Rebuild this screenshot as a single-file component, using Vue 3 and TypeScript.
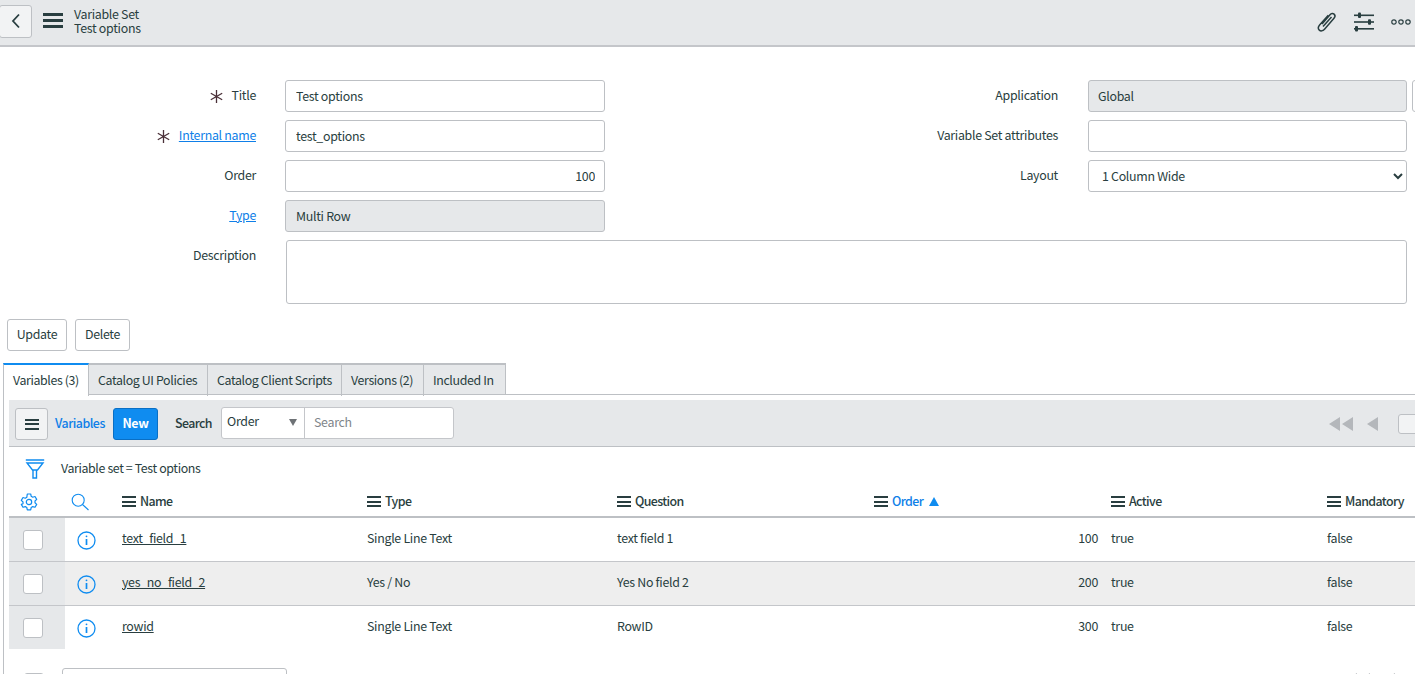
<script setup lang="ts">
interface Row {
  name: string
  type: string
  question: string
  order: number
  active: string
  mandatory: string
}

const tabs: string[] = ['Variables (3)', 'Catalog UI Policies', 'Catalog Client Scripts', 'Versions (2)', 'Included In']

const columns = [
  { label: 'Name', cls: '' },
  { label: 'Type', cls: '' },
  { label: 'Question', cls: '' },
  { label: 'Order', cls: 'sorted' },
  { label: 'Active', cls: '' },
  { label: 'Mandatory', cls: '' },
]

const rows: Row[] = [
  { name: 'text_field_1', type: 'Single Line Text', question: 'text field 1', order: 100, active: 'true', mandatory: 'false' },
  { name: 'yes_no_field_2', type: 'Yes / No', question: 'Yes No field 2', order: 200, active: 'true', mandatory: 'false' },
  { name: 'rowid', type: 'Single Line Text', question: 'RowID', order: 300, active: 'true', mandatory: 'false' },
]
</script>

<template>
  <div class="page">
    <header class="topbar">
      <button class="back">
        <svg width="10" height="16" viewBox="0 0 10 16"><path d="M8 1.500 2 8l6 6.500" fill="none" stroke="#293e40" stroke-width="1.800" /></svg>
      </button>
      <span class="burger big"><i></i><i></i><i></i></span>
      <div class="heading">
        <div>Variable Set</div>
        <div>Test options</div>
      </div>
      <div class="top-icons">
        <svg class="clip" width="22" height="22" viewBox="0 0 22 22" fill="none" stroke="#293e40" stroke-width="1.500">
          <path d="M6 13 14 3.700c1.300-1.500 3-1.600 4.100-.6s1.100 2.800-.1 4.200L8.500 18.300c-1.700 1.900-3.900 2-5.200.8s-1.200-3.200.3-5L12.300 4.300" />
          <path d="M7 15.500 15.500 6" />
        </svg>
        <svg width="20" height="20" viewBox="0 0 20 20" fill="#293e40">
          <rect y="2.500" width="20" height="1.600" /><rect x="4" y="0.500" width="3" height="5.500" rx="1" />
          <rect y="9.200" width="20" height="1.600" /><rect x="14" y="7.200" width="3" height="5.500" rx="1" />
          <rect y="16" width="20" height="1.600" /><rect x="1" y="14" width="3" height="5.500" rx="1" />
        </svg>
        <svg width="20" height="6" viewBox="0 0 20 6" fill="none" stroke="#293e40" stroke-width="1.200">
          <circle cx="3" cy="3" r="2.200" /><circle cx="10" cy="3" r="2.200" /><circle cx="17" cy="3" r="2.200" />
        </svg>
      </div>
    </header>

    <form class="form" @submit.prevent>
      <div class="form-grid">
        <div class="label">
          <svg class="req" width="13" height="13" viewBox="0 0 13 13" stroke="#4a3038" stroke-width="1.300"><path d="M6.500 0v13M.8 3.200l11.400 6.600M12.200 3.200.8 9.800" /></svg>Title
        </div>
        <input class="field" value="Test options" />
        <div class="label">Application</div>
        <div class="app-cell">
          <input class="field ro" value="Global" readonly />
          <span class="lookup"></span>
        </div>

        <div class="label">
          <svg class="req" width="13" height="13" viewBox="0 0 13 13" stroke="#4a3038" stroke-width="1.300"><path d="M6.500 0v13M.8 3.200l11.400 6.600M12.200 3.200.8 9.800" /></svg><a>Internal name</a>
        </div>
        <input class="field" value="test_options" />
        <div class="label">Variable Set attributes</div>
        <input class="field narrow" value="" />

        <div class="label">Order</div>
        <input class="field num" value="100" />
        <div class="label">Layout</div>
        <select class="field narrow pick"><option>1 Column Wide</option></select>

        <div class="label"><a>Type</a></div>
        <input class="field ro" value="Multi Row" readonly />
        <div></div>
        <div></div>

        <div class="label">Description</div>
        <textarea class="field desc"></textarea>
      </div>

      <div class="actions">
        <button class="btn">Update</button>
        <button class="btn">Delete</button>
      </div>
    </form>

    <section class="related">
      <div class="tabs">
        <div v-for="(t, i) in tabs" :key="t" class="tab" :class="{ active: i === 0 }">{{ t }}</div>
      </div>

      <div class="panel">
        <div class="toolbar">
          <button class="menu-btn"><span class="burger"><i></i><i></i><i></i></span></button>
          <span class="list-title">Variables</span>
          <button class="new">New</button>
          <span class="search-label">Search</span>
          <div class="search">
            <div class="search-col">Order<span class="caret"></span></div>
            <div class="search-input">Search</div>
          </div>
          <div class="pager">
            <svg width="24" height="14" viewBox="0 0 24 14" fill="#b4b7bb"><path d="M11 0v14L0 7zM24 0v14L13 7z" /></svg>
            <svg width="11" height="14" viewBox="0 0 11 14" fill="#b4b7bb"><path d="M11 0v14L0 7z" /></svg>
            <span class="page-box"></span>
          </div>
        </div>

        <div class="crumb">
          <svg width="20" height="21" viewBox="0 0 20 21" fill="none" stroke="#0f8cf0" stroke-width="1.400">
            <path d="M.8 1h18.400M2 4h16l-5.500 7h-5L2 4zM8 11v8h3.500v-8" />
          </svg>
          <span>Variable set = Test options</span>
        </div>

        <div class="grid head">
          <div class="cell">
            <svg class="gear" width="18" height="18" viewBox="0 0 18 18" fill="none" stroke="#0f8cf0" stroke-width="1.200" stroke-linejoin="round">
              <path d="M7.300 1h3.400l.5 2.300 1.500.9 2.300-.7 1.700 2.900-1.700 1.600v1.800l1.700 1.600-1.700 2.900-2.300-.7-1.500.9-.5 2.300H7.300l-.5-2.300-1.500-.9-2.300.7-1.700-2.900L3 10.800V9L1.300 7.400 3 4.500l2.300.7 1.500-.9z" />
              <circle cx="9" cy="9" r="2.700" />
            </svg>
          </div>
          <div class="cell">
            <svg class="lens" width="18" height="18" viewBox="0 0 18 18" fill="none" stroke="#0f8cf0" stroke-width="1.100">
              <circle cx="7.200" cy="7.200" r="6" /><path d="m11.500 11.500 6 5.500" />
            </svg>
          </div>
          <div v-for="c in columns" :key="c.label" class="cell th" :class="c.cls">
            <span class="burger"><i></i><i></i><i></i></span>
            <span class="th-text">{{ c.label }}</span>
            <span v-if="c.cls" class="sort-up"></span>
          </div>
        </div>

        <div v-for="(r, i) in rows" :key="r.name" class="grid row" :class="{ odd: i === 1, last: i === rows.length - 1 }">
          <div class="cell check-cell"><span class="check"></span></div>
          <div class="cell info-cell">
            <svg width="19" height="19" viewBox="0 0 19 19" fill="none" stroke="#0f8cf0" stroke-width="1.300">
              <circle cx="9.500" cy="9.500" r="8.500" />
              <path d="M9.500 8v6" stroke-width="1.700" />
              <circle cx="9.500" cy="5.300" r=".9" fill="#0f8cf0" stroke="none" />
            </svg>
          </div>
          <div class="cell txt"><a class="rec">{{ r.name }}</a></div>
          <div class="cell txt">{{ r.type }}</div>
          <div class="cell txt">{{ r.question }}</div>
          <div class="cell txt order">{{ r.order }}</div>
          <div class="cell txt">{{ r.active }}</div>
          <div class="cell txt">{{ r.mandatory }}</div>
        </div>

        <div class="foot">
          <span class="check foot-check"></span>
          <span class="foot-select"></span>
          <div class="pager foot-pager">
            <svg width="24" height="14" viewBox="0 0 24 14" fill="#b4b7bb"><path d="M11 0v14L0 7zM24 0v14L13 7z" /></svg>
            <svg width="11" height="14" viewBox="0 0 11 14" fill="#b4b7bb"><path d="M11 0v14L0 7z" /></svg>
            <span class="page-box"></span>
          </div>
        </div>
      </div>
    </section>
  </div>
</template>

<style>
html, body { margin: 0; background: #fff; overflow: hidden; }
</style>

<style scoped>
.page {
  width: 1415px;
  height: 674px;
  overflow: hidden;
  font-family: "Noto Sans CJK JP", "Open Sans", sans-serif;
  font-size: 12.4px;
  letter-spacing: -0.3px;
  line-height: 18px;
  color: #293e40;
}

/* header */
.topbar {
  height: 45px;
  display: flex;
  align-items: center;
  background: #e6e8ea;
  border-bottom: 2px solid #c4c6ca;
}
.back {
  width: 33px;
  height: 33px;
  margin: -3px 0 0 -1px;
  padding: 0;
  background: #f2f3f4;
  border: 1px solid #bdc0c4;
  border-radius: 3px;
  display: flex;
  align-items: center;
  justify-content: center;
}
.burger {
  display: inline-flex;
  flex-direction: column;
  justify-content: space-between;
  width: 14px;
  height: 11px;
  flex: none;
}
.burger i { display: block; height: 2px; background: #293e40; }
.burger.big {
  width: 20px;
  height: 15px;
  margin: -4px 0 0 11px;
}
.burger.big i { height: 3px; }
.heading {
  margin: -3px 0 0 11px;
  line-height: 14px;
}
.top-icons {
  margin-left: auto;
  display: flex;
  align-items: center;
  gap: 17px;
  padding-right: 4px;
  margin-top: -2px;
}
.clip { margin-right: -1px; }

/* form */
.form { padding-top: 33px; }
.form-grid {
  display: grid;
  row-gap: 8px;
  grid-template-columns: 256px 349px 453px 357px;
}
.label {
  height: 32px;
  line-height: 30px;
  text-align: right;
}
.label a { color: #0f7fe8; text-decoration: underline; }
.req {
  margin-right: 9px;
  vertical-align: -3px;
}
.field {
  display: block;
  box-sizing: border-box;
  width: 320px;
  height: 32px;
  margin-left: 29px;
  padding: 0 9px 1px 10px;
  border: 1px solid #bdc0c4;
  border-radius: 3px;
  background: #fff;
  font: inherit;
  letter-spacing: inherit;
  color: #293e40;
  outline: none;
}
.field.narrow { width: 319px; margin-left: 30px; }
.field.ro { background: #e6e8ea; }
.field.num { text-align: right; }
.field.pick { padding: 0 6px 1px 9px; }
.app-cell { display: flex; margin-left: 30px; gap: 5px; width: 327px; overflow: hidden; }
.app-cell .field { margin-left: 0; width: 319px; flex: none; padding-left: 9px; }
.lookup {
  width: 20px;
  height: 32px;
  box-sizing: border-box;
  flex: none;
  border: 1px solid #bdc0c4;
  border-radius: 3px;
}
.desc {
  grid-column: 2 / 5;
  width: 1121px;
  height: 64px;
  margin-left: 30px;
  resize: none;
}
.actions {
  display: flex;
  gap: 8px;
  padding: 15px 0 0 7px;
}
.btn {
  width: 60px;
  height: 32px;
  padding: 0 0 3px;
  background: #fff;
  border: 1px solid #bdc0c4;
  border-radius: 3px;
  font: inherit;
  letter-spacing: inherit;
  color: #293e40;
}
.btn + .btn { width: 55px; }

/* tabs */
.related { padding: 12px 0 0 3px; }
.tabs {
  display: grid;
  grid-template-columns: 85px 119px 134px 82px 1fr;
  width: 502px;
  height: 31px;
  box-sizing: border-box;
  margin-left: 1px;
  background: #e6e8ea;
  border-top: 2px solid #bdc0c4;
  border-right: 1px solid #bdc0c4;
}
.tab {
  box-sizing: border-box;
  padding-left: 9px;
  line-height: 30px;
  letter-spacing: -0.38px;
  white-space: nowrap;
  border-right: 1px solid #bdc0c4;
}
.tab:last-child { border-right: 0; }
.tab.active {
  background: #fff;
  margin: -2px 0 0 -1px;
  border-top: 2px solid #0f8cf0;
  position: relative;
  height: 33px;
  z-index: 1;
  border-left: 1px solid #bdc0c4;
}
.panel {
  border-top: 1px solid #bdc0c4;
  border-left: 1px solid #bdc0c4;
  padding: 5px 0 0 5px;
}

/* list toolbar */
.toolbar {
  height: 47px;
  box-sizing: border-box;
  display: flex;
  align-items: center;
  background: #e6e8ea;
  border-bottom: 1px solid #bdc0c4;
  padding: 2px 0 0 6px;
}
.menu-btn {
  width: 33px;
  height: 32px;
  padding: 0;
  background: #f2f3f4;
  border: 1px solid #bdc0c4;
  border-radius: 3px;
  display: flex;
  align-items: center;
  justify-content: center;
}
.list-title { width: 51px; margin: -2px 0 0 7px; color: #0f7fe8; font-weight: 500; letter-spacing: -0.5px; }
.new {
  width: 45px;
  height: 32px;
  margin-left: 7px;
  padding: 0 0 3px;
  background: #0f8cf0;
  border: 1px solid #0a6fc4;
  border-radius: 3px;
  color: #fff;
  font: inherit;
  letter-spacing: inherit;
  font-weight: 700;
}
.search-label { width: 37px; margin: -2px 0 0 17px; font-weight: 500; letter-spacing: -0.6px; }
.search {
  display: flex;
  width: 233px;
  height: 32px;
  margin-left: 9px;
  margin-top: -2px;
  box-sizing: border-box;
  background: #fff;
  border: 1px solid #c4c6ca;
  border-radius: 3px;
}
.search-col {
  width: 83px;
  box-sizing: border-box;
  padding-left: 5px;
  line-height: 26px;
  border-right: 1px solid #c4c6ca;
  position: relative;
}
.caret {
  position: absolute;
  right: 7px;
  top: 11px;
  border-left: 4.5px solid transparent;
  border-right: 4.5px solid transparent;
  border-top: 7px solid #6e7276;
}
.search-input { padding-left: 9px; line-height: 28px; color: #80858a; }
.pager {
  margin-left: auto;
  display: flex;
  align-items: center;
  gap: 14px;
}
.page-box {
  display: block;
  width: 40px;
  height: 20px;
  margin: 0 -23px 0 6px;
  box-sizing: border-box;
  border: 1px solid #bdc0c4;
  border-radius: 3px;
  background: #f2f3f4;
}

/* filter crumb */
.crumb {
  height: 40px;
  display: flex;
  align-items: center;
  padding-left: 16px;
  gap: 16px;
}
.crumb svg { margin-top: 4px; }
.crumb span { margin-top: 2px; letter-spacing: -0.38px; }

/* table */
.grid {
  display: grid;
  grid-template-columns: 56px 57px 245px 250px 257px 237px 216px 88px;
}
.cell { display: flex; align-items: center; min-width: 0; white-space: nowrap; }
.head {
  height: 29px;
  border-bottom: 2px solid #bdc0c4;
  font-weight: 500;
}
.gear { margin-left: 11px; }
.lens { margin-left: 6px; }
.th { gap: 4px; }
.th-text { margin-top: -2px; letter-spacing: -0.6px; }
.th.sorted { color: #0f7fe8; }
.sort-up {
  margin-left: 2px;
  border-left: 5px solid transparent;
  border-right: 5px solid transparent;
  border-bottom: 9px solid #0f8cf0;
}
.row {
  height: 44px;
  box-sizing: border-box;
  border-bottom: 1px solid #c4c6ca;
}
.row.last { border-bottom-color: transparent; }
.row.odd { background: #eeeeee; }
.txt { padding-bottom: 3px; }
.check-cell {
  background: #e6e8ea;
  justify-content: flex-start;
  padding-left: 14px;
}
.check {
  display: block;
  width: 20px;
  height: 20px;
  box-sizing: border-box;
  background: #fff;
  border: 1px solid #bdc0c4;
  border-radius: 3px;
}
.info-cell { padding-left: 12px; padding-top: 2px; }
.rec { text-decoration: underline; color: #293e40; }
.order { justify-content: flex-end; padding-right: 13px; }

/* list footer */
.foot {
  display: flex;
  align-items: flex-start;
  padding: 18px 0 0 15px;
}
.foot-check { margin-top: 5px; }
.foot-select {
  display: block;
  width: 225px;
  height: 30px;
  margin-left: 18px;
  box-sizing: border-box;
  background: #fff;
  border: 1px solid #bdc0c4;
  border-radius: 3px;
}
.foot-pager { margin-top: 2px; gap: 14px; }
.foot-pager .page-box { margin: 0 -40px 0 6px; }
</style>
